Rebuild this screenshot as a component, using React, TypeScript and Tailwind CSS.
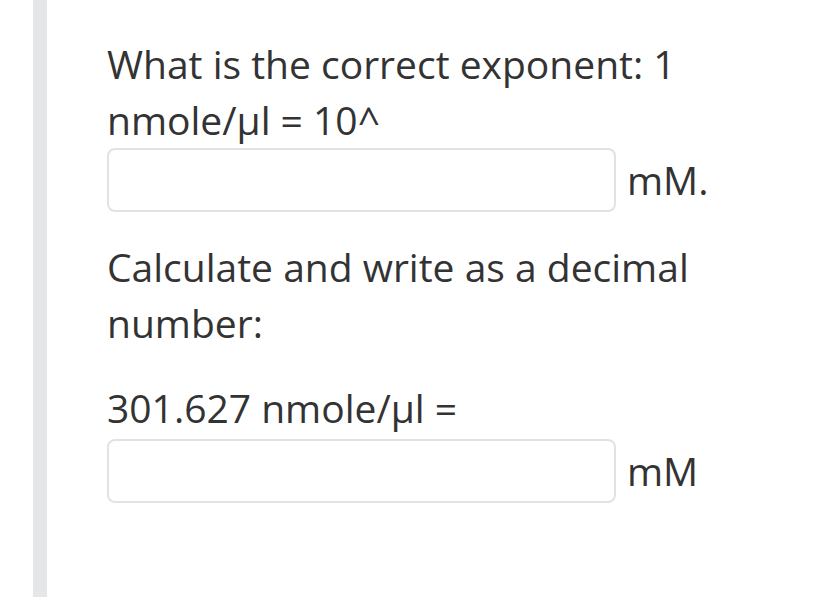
export default function App() {
  return (
    <div className="flex min-h-[597px] w-[820px] bg-white text-[#333] font-['Open_Sans',sans-serif]">
      <div className="ml-[33px] w-[14px] shrink-0 bg-[#e5e6e8]" />
      <div className="pl-[60px] pt-[36px] text-[39px] leading-[56px]">
        <p className="w-[640px]">What is the correct exponent: 1 nmole/μl = 10^</p>
        <div className="flex items-center gap-[11px]">
          <input className="h-[64px] w-[509px] rounded-[8px] border-2 border-[#e2e2e2] bg-white" />
          <span>mM.</span>
        </div>
        <p className="mt-[27px] w-[640px]">Calculate and write as a decimal number:</p>
        <p className="mt-[29px]">301.627 nmole/μl =</p>
        <div className="mt-[3px] flex items-center gap-[11px]">
          <input className="h-[64px] w-[509px] rounded-[8px] border-2 border-[#e2e2e2] bg-white" />
          <span>mM</span>
        </div>
      </div>
    </div>
  )
}
